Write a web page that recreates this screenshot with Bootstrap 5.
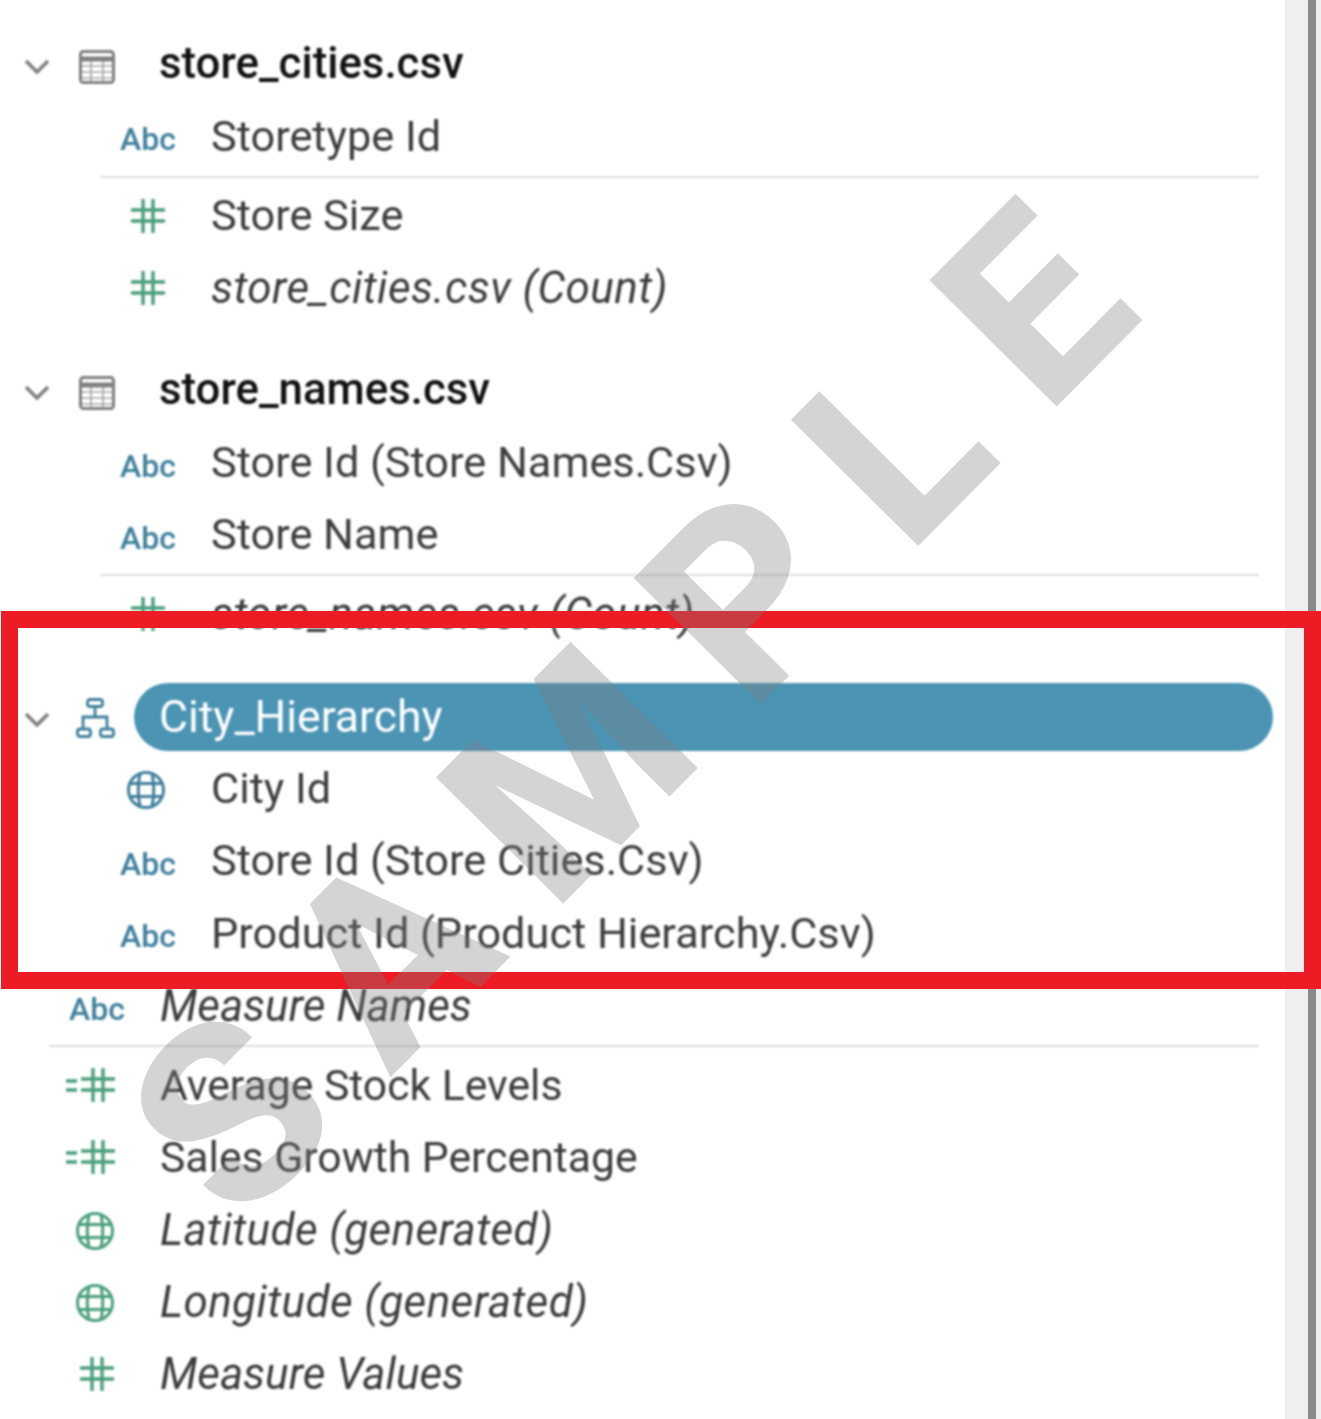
<!DOCTYPE html>
<html lang="en">
<head>
    <meta charset="UTF-8">
    <meta name="viewport" content="width=device-width, initial-scale=1.0">
    <title>City Hierarchy</title>
    <link rel="stylesheet" href="https://cdn.jsdelivr.net/npm/bootstrap@5.3.0/dist/css/bootstrap.min.css">
    <style>
        body {
            background: #fff;
            height: 1419px;
            overflow: hidden;
            font-family: Roboto, "Liberation Sans", sans-serif;
            color: #3c3c3c;
        }
        .page-wrap {
            height: 1419px;
        }
        .data-pane {
            width: 1285px;
            padding-top: 28px;
            filter: blur(.8px);
        }
        .scroll-track {
            width: 36px;
            background: #efefef;
        }
        .scroll-thumb {
            width: 8px;
            margin-left: 23px;
            height: 100%;
            background: #8a8a8a;
        }
        .tree-row {
            height: 72.3px;
            font-size: 43px;
            line-height: 1;
            white-space: nowrap;
        }
        .lvl-root { padding-left: 60px; font-size: 42.7px; }
        .lvl-child { padding-left: 111px; font-size: 43.3px; }
        .ico-slot {
            width: 74px;
            margin-right: 26px;
            flex: none;
        }
        .chev-slot {
            width: 60px;
            padding-left: 22px;
            padding-top: 6px;
            flex: none;
        }
        .table-name {
            font-size: 43.8px;
            font-weight: 500;
            color: #111;
            padding-left: 25px;
        }
        .ico-slot.head {
            margin-right: 0;
        }
        .head-down { margin-top: 6px; }
        .hier-pill {
            flex-grow: 1;
            margin-right: 12px;
            height: 68px;
            line-height: 68px;
            padding-left: 25px;
            border-radius: 34px;
            background: #4b94b3;
            color: #fff;
            font-size: 44.5px;
        }
        .abc-ico {
            font-size: 32px;
            font-weight: 500;
            color: #3f7f9c;
            padding-top: 6px;
        }
        .tree-sep {
            height: 2px;
            margin: 3px 26px 2px 100px;
            background: #dedede;
        }
        .tree-sep.wide {
            margin-left: 49px;
        }
        .group-gap {
            height: 30px;
        }
        .ico-green { color: #4a9f7b; }
        .ico-blue { color: #3f7f9c; }
        .ico-gray { color: #7f7f7f; }
        .hier-ico { margin: 2px 3px 0 0; }
        .globe-ico { margin: 3px 4px 0 0; }
        .calc-ico { margin-right: 13px; }
        .fst-italic { font-size: 44px; }
        .it-wide { letter-spacing: .4px; }
        .red-frame {
            left: 1px;
            right: 0;
            top: 611px;
            height: 378px;
            border: 17px solid #ed1c24;
            pointer-events: none;
        }
        .sample-mark {
            left: 652px;
            top: 692px;
            font-family: Roboto, sans-serif;
            font-weight: 800;
            font-size: 252px;
            line-height: 1;
            letter-spacing: 60px;
            color: rgba(124, 124, 124, .33);
            transform: translate(-50%, -50%) rotate(-45.2deg);
            white-space: nowrap;
            pointer-events: none;
        }
    </style>
</head>
<body>
    <!-- icon sheet -->
    <svg width="0" height="0" class="d-block">
        <symbol id="i-hash" viewBox="0 0 36 36">
            <path d="M13 1V35M23 1V35M1 12H35M1 23H35" fill="none" stroke="currentColor" stroke-width="3.4"/>
        </symbol>
        <symbol id="i-calc" viewBox="0 0 50 36">
            <path d="M0 14H11M0 23H11" fill="none" stroke="currentColor" stroke-width="3.4"/>
            <path d="M27 1V35M37 1V35M15 12H49M15 23H49" fill="none" stroke="currentColor" stroke-width="3.4"/>
        </symbol>
        <symbol id="i-globe" viewBox="0 0 40 40">
            <g fill="none" stroke="currentColor" stroke-width="3">
                <circle cx="20" cy="20" r="17.5"/>
                <path d="M4 13.5H36M4 26.5H36"/>
                <path d="M14 3.5Q10.5 20 14 36.5M26 3.5Q29.5 20 26 36.5"/>
            </g>
        </symbol>
        <symbol id="i-table" viewBox="0 0 36 34">
            <rect x="1.5" y="1.5" width="33" height="31" rx="3" fill="none" stroke="currentColor" stroke-width="3"/>
            <path d="M2 9H34" stroke="currentColor" stroke-width="5"/>
            <path d="M3 16H33M3 22H33M3 28H33M12 11V32M24 11V32" fill="none" stroke="currentColor" stroke-width="1.6" opacity=".7"/>
        </symbol>
        <symbol id="i-hier" viewBox="0 0 40 40">
            <g fill="none" stroke="currentColor" stroke-width="2.8">
                <rect x="11.5" y="1.5" width="15" height="7" rx="2.5"/>
                <rect x="1.5" y="31" width="13" height="7.5" rx="2.5"/>
                <rect x="24.5" y="31" width="13" height="7.5" rx="2.5"/>
                <path d="M19 9V19M7 31V19H31V31"/>
            </g>
        </symbol>
        <symbol id="i-chev" viewBox="0 0 30 18">
            <path d="M4 3L15 14L26 3" fill="none" stroke="currentColor" stroke-width="3.6"/>
        </symbol>
    </svg>

    <div class="page-wrap d-flex position-relative">
        <div class="data-pane flex-shrink-0">

            <!-- store_cities.csv -->
            <div class="tree-row d-flex align-items-center">
                <div class="chev-slot"><svg class="d-block ico-gray" width="30" height="18"><use href="#i-chev"/></svg></div>
                <div class="ico-slot head d-flex justify-content-center"><svg class="ico-gray head-down" width="36" height="34"><use href="#i-table"/></svg></div>
                <div class="table-name">store_cities.csv</div>
            </div>
            <div class="tree-row lvl-child d-flex align-items-center">
                <div class="ico-slot text-center abc-ico">Abc</div>
                <div>Storetype Id</div>
            </div>
            <div class="tree-sep"></div>
            <div class="tree-row lvl-child d-flex align-items-center">
                <div class="ico-slot d-flex justify-content-center"><svg class="ico-green" width="36" height="36"><use href="#i-hash"/></svg></div>
                <div>Store Size</div>
            </div>
            <div class="tree-row lvl-child d-flex align-items-center">
                <div class="ico-slot d-flex justify-content-center"><svg class="ico-green" width="36" height="36"><use href="#i-hash"/></svg></div>
                <div class="fst-italic it-wide">store_cities.csv (Count)</div>
            </div>
            <div class="group-gap"></div>

            <!-- store_names.csv -->
            <div class="tree-row d-flex align-items-center">
                <div class="chev-slot"><svg class="d-block ico-gray" width="30" height="18"><use href="#i-chev"/></svg></div>
                <div class="ico-slot head d-flex justify-content-center"><svg class="ico-gray head-down" width="36" height="34"><use href="#i-table"/></svg></div>
                <div class="table-name">store_names.csv</div>
            </div>
            <div class="tree-row lvl-child d-flex align-items-center">
                <div class="ico-slot text-center abc-ico">Abc</div>
                <div>Store Id (Store Names.Csv)</div>
            </div>
            <div class="tree-row lvl-child d-flex align-items-center">
                <div class="ico-slot text-center abc-ico">Abc</div>
                <div>Store Name</div>
            </div>
            <div class="tree-sep"></div>
            <div class="tree-row lvl-child d-flex align-items-center">
                <div class="ico-slot d-flex justify-content-center"><svg class="ico-green" width="36" height="36"><use href="#i-hash"/></svg></div>
                <div class="fst-italic it-wide">store_names.csv (Count)</div>
            </div>
            <div class="group-gap"></div>

            <!-- City_Hierarchy -->
            <div class="tree-row d-flex align-items-center">
                <div class="chev-slot"><svg class="d-block ico-gray" width="30" height="18"><use href="#i-chev"/></svg></div>
                <div class="ico-slot head d-flex justify-content-center"><svg class="ico-blue hier-ico" width="40" height="40"><use href="#i-hier"/></svg></div>
                <div class="hier-pill">City_Hierarchy</div>
            </div>
            <div class="tree-row lvl-child d-flex align-items-center">
                <div class="ico-slot d-flex justify-content-center"><svg class="ico-blue globe-ico" width="40" height="40"><use href="#i-globe"/></svg></div>
                <div>City Id</div>
            </div>
            <div class="tree-row lvl-child d-flex align-items-center">
                <div class="ico-slot text-center abc-ico">Abc</div>
                <div>Store Id (Store Cities.Csv)</div>
            </div>
            <div class="tree-row lvl-child d-flex align-items-center">
                <div class="ico-slot text-center abc-ico">Abc</div>
                <div>Product Id (Product Hierarchy.Csv)</div>
            </div>

            <!-- root fields -->
            <div class="tree-row lvl-root d-flex align-items-center">
                <div class="ico-slot text-center abc-ico">Abc</div>
                <div class="fst-italic">Measure Names</div>
            </div>
            <div class="tree-sep wide"></div>
            <div class="tree-row lvl-root d-flex align-items-center">
                <div class="ico-slot d-flex justify-content-center"><svg class="ico-green calc-ico" width="50" height="36"><use href="#i-calc"/></svg></div>
                <div>Average Stock Levels</div>
            </div>
            <div class="tree-row lvl-root d-flex align-items-center">
                <div class="ico-slot d-flex justify-content-center"><svg class="ico-green calc-ico" width="50" height="36"><use href="#i-calc"/></svg></div>
                <div>Sales Growth Percentage</div>
            </div>
            <div class="tree-row lvl-root d-flex align-items-center">
                <div class="ico-slot d-flex justify-content-center"><svg class="ico-green globe-ico" width="40" height="40"><use href="#i-globe"/></svg></div>
                <div class="fst-italic it-wide">Latitude (generated)</div>
            </div>
            <div class="tree-row lvl-root d-flex align-items-center">
                <div class="ico-slot d-flex justify-content-center"><svg class="ico-green globe-ico" width="40" height="40"><use href="#i-globe"/></svg></div>
                <div class="fst-italic it-wide">Longitude (generated)</div>
            </div>
            <div class="tree-row lvl-root d-flex align-items-center">
                <div class="ico-slot d-flex justify-content-center"><svg class="ico-green" width="36" height="36"><use href="#i-hash"/></svg></div>
                <div class="fst-italic">Measure Values</div>
            </div>
        </div>

        <div class="scroll-track flex-shrink-0"><div class="scroll-thumb"></div></div>

        <div class="red-frame position-absolute"></div>
        <div class="sample-mark position-absolute">SAMPLE</div>
    </div>
</body>
</html>
